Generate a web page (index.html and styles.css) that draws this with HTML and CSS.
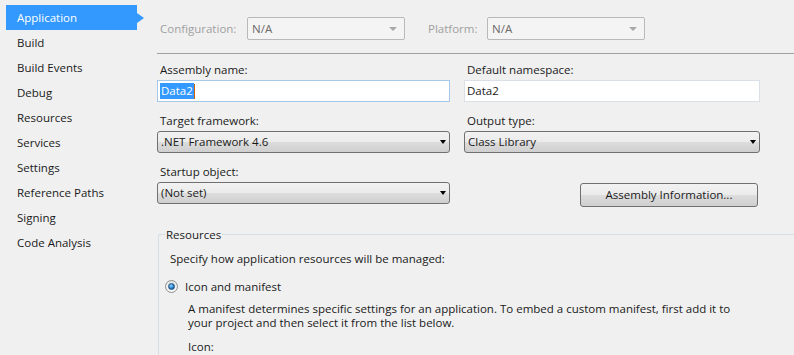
FILE: index.html
```html
<!DOCTYPE html>
<html>
<head>
<meta charset="utf-8">
<link rel="stylesheet" href="styles.css">
</head>
<body>
<div class="page">
  <nav class="nav">
    <div class="nav-item active">Application<span class="nav-arrow"></span></div>
    <div class="nav-item">Build</div>
    <div class="nav-item">Build Events</div>
    <div class="nav-item">Debug</div>
    <div class="nav-item">Resources</div>
    <div class="nav-item">Services</div>
    <div class="nav-item">Settings</div>
    <div class="nav-item">Reference Paths</div>
    <div class="nav-item">Signing</div>
    <div class="nav-item">Code Analysis</div>
  </nav>
  <main class="content">
    <div class="topbar">
      <span class="dim-label cfg-label">Configuration:</span>
      <div class="dis-select cfg-select">N/A<span class="dis-arrow"></span></div>
      <span class="dim-label plat-label">Platform:</span>
      <div class="dis-select">N/A<span class="dis-arrow"></span></div>
    </div>
    <div class="form">
      <div class="field">
        <div class="label">Assembly name:</div>
        <div class="textbox focused"><span class="sel">Data2</span><span class="caret"></span></div>
      </div>
      <div class="field">
        <div class="label">Default namespace:</div>
        <div class="textbox">Data2</div>
      </div>
      <div class="field">
        <div class="label">Target framework:</div>
        <div class="combo">.NET Framework 4.6<span class="combo-arrow"></span></div>
      </div>
      <div class="field">
        <div class="label">Output type:</div>
        <div class="combo">Class Library<span class="combo-arrow"></span></div>
      </div>
      <div class="field">
        <div class="label">Startup object:</div>
        <div class="combo">(Not set)<span class="combo-arrow"></span></div>
      </div>
      <div class="field btn-field">
        <div class="button">Assembly Information...</div>
      </div>
    </div>
    <fieldset class="group">
      <legend class="legend">Resources</legend>
      <div class="group-intro">Specify how application resources will be managed:</div>
      <div class="radio-row"><span class="radio"><span class="radio-dot"></span></span>Icon and manifest</div>
      <div class="desc">A manifest determines specific settings for an application. To embed a custom manifest, first add it to<br>your project and then select it from the list below.</div>
      <div class="desc icon-label">Icon:</div>
    </fieldset>
  </main>
</div>
</body>
</html>
```
FILE: styles.css
```css
html, body {
  margin: 0;
  padding: 0;
  background: #f0f0f0;
  overflow: hidden;
}
body {
  font-family: "Open Sans", "Noto Sans", sans-serif;
  font-size: 11px;
  color: #1a1a1a;
  width: 794px;
  height: 355px;
}
.page {
  display: flex;
  height: 355px;
}
.nav {
  width: 157px;
  flex: none;
  padding-top: 5px;
}
.nav-item {
  position: relative;
  height: 25px;
  line-height: 25px;
  padding-left: 17px;
  font-size: 11.5px;
}
.nav-item.active {
  margin-left: 6px;
  width: 131px;
  padding-left: 11px;
  box-sizing: border-box;
  background: #3399ff;
  color: #fff;
}
.nav-arrow {
  position: absolute;
  right: -7px;
  top: 8px;
  width: 0;
  height: 0;
  border-top: 5px solid transparent;
  border-bottom: 5px solid transparent;
  border-left: 7px solid #3399ff;
}
.content {
  flex: 1;
  min-width: 0;
  display: flex;
  flex-direction: column;
  height: 355px;
}
.topbar {
  height: 54px;
  flex: none;
  border-bottom: 1px solid #a0a0a0;
  display: flex;
  align-items: flex-start;
  padding-top: 17px;
  box-sizing: border-box;
  padding-left: 3px;
}
.dim-label {
  color: #a0a0a0;
  line-height: 23px;
  font-size: 11.5px;
}
.cfg-label { width: 87px; }
.plat-label { width: 59px; margin-left: 23px; }
.dis-select {
  position: relative;
  width: 158px;
  height: 23px;
  box-sizing: border-box;
  border: 1px solid #b9b9b9;
  border-radius: 2px;
  background: #f4f4f4;
  color: #6a6a6a;
  line-height: 21px;
  padding-left: 4px;
  font-size: 11.5px;
}
.dis-arrow {
  position: absolute;
  right: 7px;
  top: 9px;
  border-left: 4px solid transparent;
  border-right: 4px solid transparent;
  border-top: 4px solid #a8a8a8;
}
.form {
  display: grid;
  grid-template-columns: 293px 296px;
  column-gap: 14px;
  row-gap: 10px;
  padding-top: 7px;
  flex: none;
}
.field {
  display: flex;
  flex-direction: column;
}
.label {
  padding-left: 3px;
  height: 19px;
  line-height: 17px;
  font-size: 11.5px;
}
.textbox {
  height: 22px;
  box-sizing: border-box;
  border: 1px solid #dbdfe6;
  background: #fff;
  line-height: 20px;
  padding-left: 2px;
  font-size: 11.5px;
  display: flex;
  align-items: center;
}
.textbox.focused {
  border-color: #a5c7e8;
}
.sel {
  background: #3399ff;
  color: #fff;
  line-height: 16px;
  padding: 0 1px;
}
.caret {
  width: 1px;
  height: 15px;
  background: #d06000;
}
.combo {
  position: relative;
  height: 22px;
  box-sizing: border-box;
  border: 1px solid #707070;
  border-radius: 3px;
  background: linear-gradient(#f2f2f2 0%, #ebebeb 50%, #dddddd 51%, #cfcfcf 100%);
  line-height: 20px;
  padding-left: 3px;
  font-size: 11.5px;
}
.combo-arrow {
  position: absolute;
  right: 3px;
  top: 8px;
  border-left: 3.5px solid transparent;
  border-right: 3.5px solid transparent;
  border-top: 4px solid #000;
}
.btn-field {
  justify-content: flex-end;
  align-items: flex-end;
  padding-right: 2px;
}
.button {
  width: 178px;
  height: 24px;
  box-sizing: border-box;
  border: 1px solid #707070;
  border-radius: 3px;
  background: linear-gradient(#f2f2f2 0%, #ebebeb 50%, #dddddd 51%, #cfcfcf 100%);
  text-align: center;
  line-height: 22px;
  font-size: 11.5px;
  margin-bottom: -3px;
}
.group {
  flex: 1;
  min-height: 0;
  margin: 23px 0 0 1px;
  border: 1px solid #d5dfe5;
  border-radius: 3px 0 0 0;
  border-right: none;
  border-bottom: none;
  padding: 0 0 0 6px;
  min-width: 0;
}
.legend {
  padding: 0 1px;
  margin-left: 0;
  font-size: 11.5px;
  line-height: 15px;
}
.group-intro {
  margin-top: 9px;
  margin-left: 5px;
  line-height: 15px;
  font-size: 11.5px;
}
.radio-row {
  display: flex;
  align-items: center;
  margin-top: 13px;
  line-height: 15px;
  font-size: 11.5px;
}
.radio {
  width: 11px;
  height: 11px;
  border: 1px solid #8e8f8f;
  border-radius: 50%;
  background: linear-gradient(#e6e6e6, #fafafa);
  display: flex;
  align-items: center;
  justify-content: center;
  margin-right: 7px;
}
.radio-dot {
  width: 5px;
  height: 5px;
  border-radius: 50%;
  background: radial-gradient(circle at 40% 35%, #9fd4ff 0%, #2a8ad4 50%, #0f4a82 100%);
  border: 1px solid #214f7c;
}
.desc {
  margin-left: 23px;
  margin-top: 8px;
  line-height: 14px;
  font-size: 11.5px;
}
.icon-label {
  margin-top: 10px;
}
```
